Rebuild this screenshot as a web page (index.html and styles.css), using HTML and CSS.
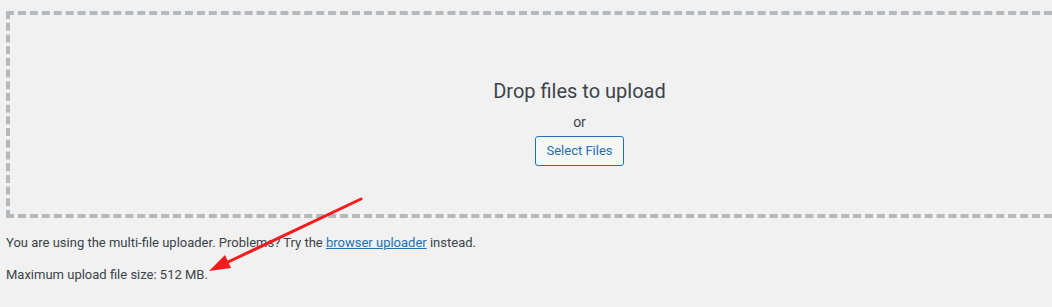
FILE: index.html
```html
<!DOCTYPE html>
<html>
<head>
<meta charset="utf-8">
<link rel="stylesheet" href="styles.css">
</head>
<body>
<div class="page">
  <div class="drop">
    <div class="inside">
      <p class="info">Drop files to upload</p>
      <p class="or">or</p>
      <button class="button" type="button">Select Files</button>
    </div>
  </div>
  <p class="note">You are using the multi-file uploader. Problems? Try the <a href="#">browser uploader</a> instead.</p>
  <p class="note">Maximum upload file size: 512 MB.</p>
</div>
<svg class="arrow" width="1052" height="307" viewBox="0 0 1052 307">
  <line x1="361" y1="199" x2="226" y2="263" stroke="#f41c1c" stroke-width="3" stroke-linecap="round"/>
  <polygon points="209,271 225,255 231,268" fill="#f41c1c"/>
</svg>
</body>
</html>
```
FILE: styles.css
```css
html, body {
  margin: 0;
  background: #f1f1f1;
  overflow: hidden;
}
body {
  width: 1052px;
  height: 307px;
  position: relative;
  font-family: Roboto, "Noto Sans", sans-serif;
  color: #3c434a;
  font-size: 13px;
}
.page {
  padding: 11px 0 0 6px;
}
.drop {
  box-sizing: border-box;
  height: 207px;
  border: 4px dashed #b4b9be;
  border-right: none;
  padding-left: 97px;
}
.inside {
  display: flex;
  flex-direction: column;
  align-items: center;
  padding-top: 62px;
}
.info {
  margin: 0;
  font-size: 20px;
  line-height: 28px;
}
.or {
  margin: 7px 0 4px;
  font-size: 14px;
  line-height: 20px;
}
.button {
  box-sizing: border-box;
  height: 30px;
  padding: 0 10px;
  border: 1px solid #2271b1;
  border-radius: 3px;
  background: #f6f7f7;
  color: #2271b1;
  font-family: inherit;
  font-size: 13px;
  line-height: 28px;
}
.note {
  margin: 15px 0 0;
  line-height: 19px;
}
.note + .note {
  margin-top: 13px;
}
.note a {
  color: #2271b1;
  text-decoration: underline;
}
.arrow {
  position: absolute;
  top: 0;
  left: 0;
}
```
